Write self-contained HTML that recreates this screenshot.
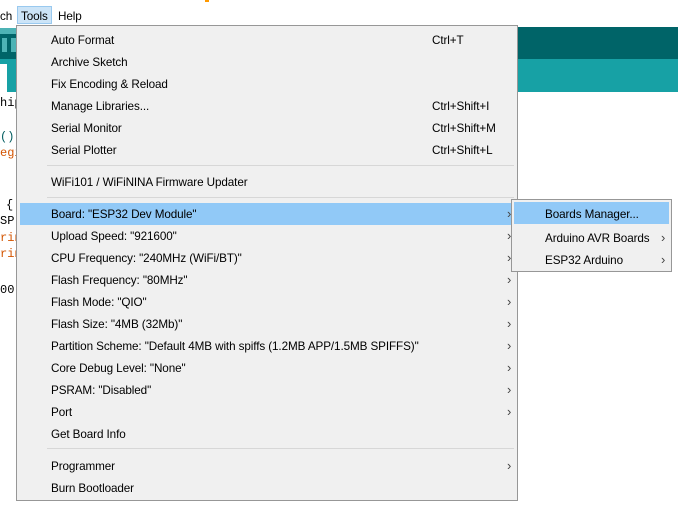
<!DOCTYPE html>
<html><head><style>
body{margin:0;width:678px;height:517px;background:#fff;position:relative;overflow:hidden;font-family:"Liberation Sans",sans-serif;font-size:11.7px;color:#000}
.a{position:absolute}
.t{position:absolute;white-space:nowrap;line-height:14px;letter-spacing:-0.1px;margin-top:1px}
.code{position:absolute;font-family:"Liberation Mono",monospace;font-size:12px;white-space:nowrap;line-height:14px}
.sep{position:absolute;left:47px;width:467px;height:1px;background:#d7d7d7}
.arr{position:absolute;left:507px;font-size:13px;color:#444;line-height:14px;margin-top:1px}
</style></head><body>
<div class="a" style="left:205px;top:0;width:4px;height:2px;background:#f90"></div>
<div class="t" style="left:0;top:9px">ch</div>
<div class="a" style="left:17px;top:6px;width:35px;height:18px;background:#cce4f7;border:1px solid #99c9ef;box-sizing:border-box"></div>
<div class="t" style="left:21px;top:9px">Tools</div>
<div class="t" style="left:58px;top:9px">Help</div>
<div class="a" style="left:0;top:28px;width:17px;height:6px;background:#4db3b5"></div>
<div class="a" style="left:0;top:34px;width:17px;height:25px;background:#006468"></div>
<div class="a" style="left:2px;top:38px;width:5px;height:14px;background:#4db3b5"></div>
<div class="a" style="left:11px;top:38px;width:6px;height:14px;background:#4db3b5"></div>
<div class="a" style="left:0;top:59px;width:17px;height:33px;background:#17a1a5"></div>
<div class="a" style="left:0;top:64px;width:7px;height:28px;background:#fff"></div>
<div class="a" style="left:518px;top:27px;width:160px;height:32px;background:#006468"></div>
<div class="a" style="left:518px;top:59px;width:160px;height:33px;background:#17a1a5"></div>
<div class="code" style="left:0;top:96px">hip</div>
<div class="code" style="left:0;top:130px;color:#005c5f">()</div>
<div class="code" style="left:0;top:146px;color:#d35400">egi</div>
<div class="code" style="left:6px;top:198px;color:#000">{</div>
<div class="code" style="left:0;top:214px">SP.</div>
<div class="code" style="left:0;top:231px;color:#d35400">rin</div>
<div class="code" style="left:0;top:247px;color:#d35400">rin</div>
<div class="code" style="left:0;top:283px">00)</div>
<div class="a" style="left:16px;top:25px;width:502px;height:476px;background:#f0f0f0;border:1px solid #979797;box-sizing:border-box"></div>
<div class="a" style="left:20px;top:203px;width:496px;height:22px;background:#91c9f7"></div>
<div class="t" style="left:51px;top:33px">Auto Format</div><div class="t" style="left:432px;top:33px">Ctrl+T</div>
<div class="t" style="left:51px;top:55px">Archive Sketch</div>
<div class="t" style="left:51px;top:77px">Fix Encoding &amp; Reload</div>
<div class="t" style="left:51px;top:99px">Manage Libraries...</div><div class="t" style="left:432px;top:99px">Ctrl+Shift+I</div>
<div class="t" style="left:51px;top:121px">Serial Monitor</div><div class="t" style="left:432px;top:121px">Ctrl+Shift+M</div>
<div class="t" style="left:51px;top:143px">Serial Plotter</div><div class="t" style="left:432px;top:143px">Ctrl+Shift+L</div>
<div class="sep" style="top:165px"></div>
<div class="t" style="left:51px;top:175px">WiFi101 / WiFiNINA Firmware Updater</div>
<div class="sep" style="top:197px"></div>
<div class="t" style="left:51px;top:207px">Board: "ESP32 Dev Module"</div><div class="arr" style="top:206px">›</div>
<div class="t" style="left:51px;top:229px">Upload Speed: "921600"</div><div class="arr" style="top:228px">›</div>
<div class="t" style="left:51px;top:251px">CPU Frequency: "240MHz (WiFi/BT)"</div><div class="arr" style="top:250px">›</div>
<div class="t" style="left:51px;top:273px">Flash Frequency: "80MHz"</div><div class="arr" style="top:272px">›</div>
<div class="t" style="left:51px;top:295px">Flash Mode: "QIO"</div><div class="arr" style="top:294px">›</div>
<div class="t" style="left:51px;top:317px">Flash Size: "4MB (32Mb)"</div><div class="arr" style="top:316px">›</div>
<div class="t" style="left:51px;top:339px">Partition Scheme: "Default 4MB with spiffs (1.2MB APP/1.5MB SPIFFS)"</div><div class="arr" style="top:338px">›</div>
<div class="t" style="left:51px;top:361px">Core Debug Level: "None"</div><div class="arr" style="top:360px">›</div>
<div class="t" style="left:51px;top:383px">PSRAM: "Disabled"</div><div class="arr" style="top:382px">›</div>
<div class="t" style="left:51px;top:405px">Port</div><div class="arr" style="top:404px">›</div>
<div class="t" style="left:51px;top:427px">Get Board Info</div>
<div class="sep" style="top:448px"></div>
<div class="t" style="left:51px;top:459px">Programmer</div><div class="arr" style="top:458px">›</div>
<div class="t" style="left:51px;top:481px">Burn Bootloader</div>
<div class="a" style="left:511px;top:199px;width:161px;height:73px;background:#f0f0f0;border:1px solid #979797;box-sizing:border-box"></div>
<div class="a" style="left:514px;top:202px;width:155px;height:22px;background:#91c9f7"></div>
<div class="t" style="left:545px;top:207px">Boards Manager...</div>
<div class="t" style="left:545px;top:231px">Arduino AVR Boards</div><div class="arr" style="left:661px;top:230px">›</div>
<div class="t" style="left:545px;top:253px">ESP32 Arduino</div><div class="arr" style="left:661px;top:252px">›</div>
</body></html>
